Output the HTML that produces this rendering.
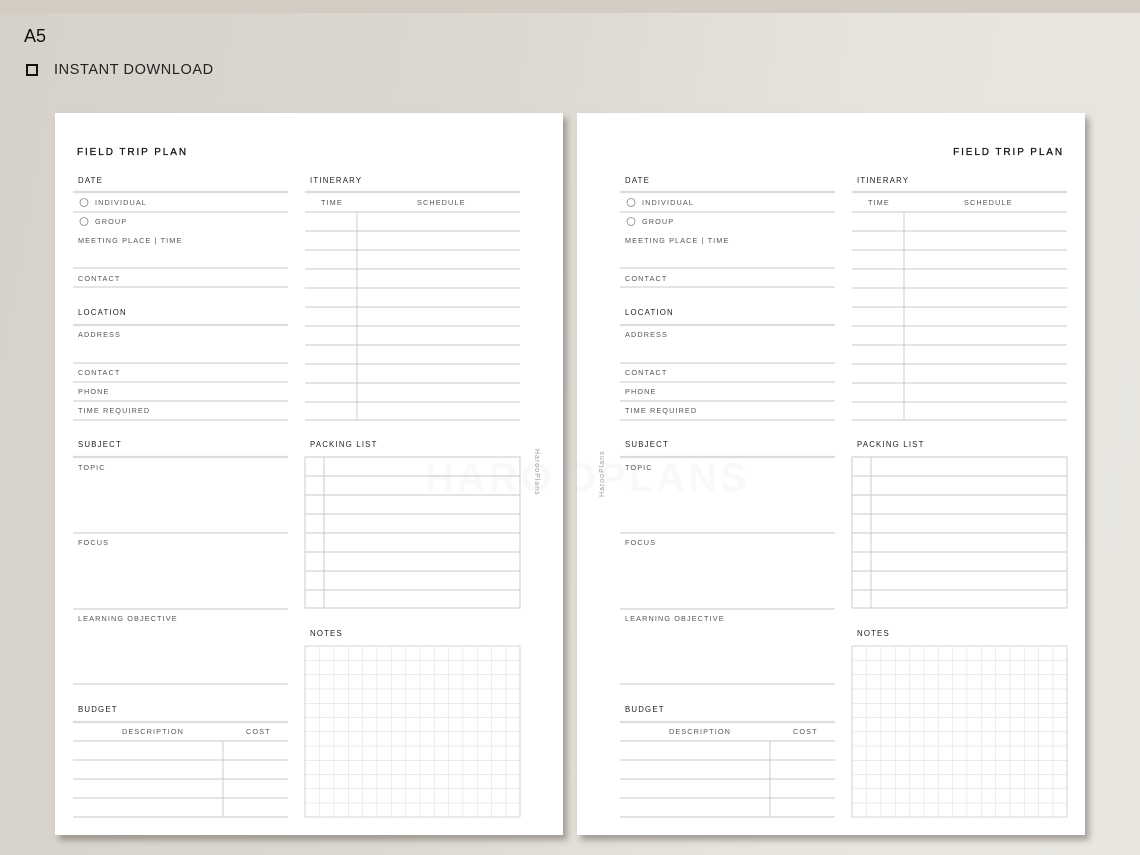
<!DOCTYPE html>
<html><head><meta charset="utf-8"><style>
html,body{margin:0;padding:0}
body{width:1140px;height:855px;overflow:hidden;position:relative;background:linear-gradient(100deg,#d6d1c9 0%,#dcd8d1 40%,#e7e4de 70%,#e9e6e0 100%);font-family:"Liberation Sans",sans-serif}
.top{position:absolute;left:0;top:0;width:1140px;height:13px;background:#d3ccc2}
.a5{position:absolute;left:24px;top:26px;font-size:18px;color:#111}
.box{position:absolute;left:26px;top:64px;width:8px;height:8px;border:2.5px solid #111}
.dl{position:absolute;left:54px;top:62px;font-size:14.5px;letter-spacing:0.6px;color:#222}
.page{position:absolute;top:113px;width:508px;height:722px;background:#fff;box-shadow:4px 5px 6px rgba(80,75,65,.45)}
svg{position:absolute;left:0;top:0}
text{font-family:"Liberation Sans",sans-serif;font-size:7.3px;letter-spacing:1.1px;fill:#555}
text.h{font-size:7.8px;fill:#222;letter-spacing:1.2px}
text.t{font-family:"Liberation Sans",sans-serif;font-size:10px;fill:#111;letter-spacing:1.9px;stroke:#111;stroke-width:0.25}
text.w{font-size:7px;fill:#999;letter-spacing:1px}
text.wm{font-size:40px;font-weight:bold;fill:#f9f9f9;letter-spacing:3px}
</style></head><body>
<div class="top"></div>
<div class="a5">A5</div><div class="box"></div><div class="dl">INSTANT DOWNLOAD</div>

<svg width="0" height="0" style="position:absolute">
<defs>
<pattern id="grid" patternUnits="userSpaceOnUse" x="250" y="533" width="14.333" height="14.25">
<path d="M0 0H14.333M0 0V14.25" stroke="#d8d8d8" stroke-width="0.9" fill="none"/>
</pattern>
<g id="L" fill="none">
<g stroke="#dcdcdc" stroke-width="2.2">
<path d="M18 79H233M18 212H233M18 344H233M18 609H233M250 79H465"/>
</g>
<g stroke="#c8c8c8" stroke-width="0.9">
<path d="M18 99H233M18 155H233M18 174H233M18 250H233M18 269H233M18 288H233M18 307H233M18 420H233M18 496H233M18 571H233M18 628H233M18 647H233M18 666H233M18 685H233M18 704H233M168 628V704"/>
<path d="M250 99H465M250 118H465M250 137H465M250 156H465M250 175H465M250 194H465M250 213H465M250 232H465M250 251H465M250 270H465M250 289H465M250 307H465M302 99V307"/>
<path d="M250 344H465V495H250ZM250 363H465M250 382H465M250 401H465M250 420H465M250 439H465M250 458H465M250 477H465M269 344V495"/>
</g>
<rect x="250" y="533" width="215" height="171" fill="url(#grid)" stroke="#d0d0d0" stroke-width="0.9"/>
<circle cx="29" cy="89.5" r="4" stroke="#888" stroke-width="0.8"/>
<circle cx="29" cy="108.5" r="4" stroke="#888" stroke-width="0.8"/>
</g>
</defs></svg>

<div class="page" style="left:55px">
<svg width="508" height="722">
<text class="wm" x="370" y="378">HARO</text>
<use href="#L" x="0" y="0"/>
<text class="t" x="22" y="42">FIELD TRIP PLAN</text>
<text class="h" x="23" y="70">DATE</text>
<text x="40" y="92">INDIVIDUAL</text>
<text x="40" y="111">GROUP</text>
<text x="23" y="130">MEETING PLACE | TIME</text>
<text x="23" y="168">CONTACT</text>
<text class="h" x="23" y="202">LOCATION</text>
<text x="23" y="224">ADDRESS</text>
<text x="23" y="262">CONTACT</text>
<text x="23" y="281">PHONE</text>
<text x="23" y="300">TIME REQUIRED</text>
<text class="h" x="255" y="70">ITINERARY</text>
<text x="266" y="92">TIME</text>
<text x="362" y="92">SCHEDULE</text>
<text class="h" x="23" y="334">SUBJECT</text>
<text x="23" y="357">TOPIC</text>
<text x="23" y="432">FOCUS</text>
<text x="23" y="508">LEARNING OBJECTIVE</text>
<text class="h" x="23" y="599">BUDGET</text>
<text x="67" y="621">DESCRIPTION</text>
<text x="191" y="621">COST</text>
<text class="h" x="255" y="334">PACKING LIST</text>
<text class="h" x="255" y="523">NOTES</text>
<text class="w" transform="translate(480,336) rotate(90)">HarooPlans</text>
</svg></div>

<div class="page" style="left:577px">
<svg width="508" height="722">
<text class="wm" x="-12" y="378">OPLANS</text>
<use href="#L" x="25" y="0"/>
<text class="t" x="487" y="42" text-anchor="end">FIELD TRIP PLAN</text>
<g transform="translate(25,0)">
<text class="h" x="23" y="70">DATE</text>
<text x="40" y="92">INDIVIDUAL</text>
<text x="40" y="111">GROUP</text>
<text x="23" y="130">MEETING PLACE | TIME</text>
<text x="23" y="168">CONTACT</text>
<text class="h" x="23" y="202">LOCATION</text>
<text x="23" y="224">ADDRESS</text>
<text x="23" y="262">CONTACT</text>
<text x="23" y="281">PHONE</text>
<text x="23" y="300">TIME REQUIRED</text>
<text class="h" x="255" y="70">ITINERARY</text>
<text x="266" y="92">TIME</text>
<text x="362" y="92">SCHEDULE</text>
<text class="h" x="23" y="334">SUBJECT</text>
<text x="23" y="357">TOPIC</text>
<text x="23" y="432">FOCUS</text>
<text x="23" y="508">LEARNING OBJECTIVE</text>
<text class="h" x="23" y="599">BUDGET</text>
<text x="67" y="621">DESCRIPTION</text>
<text x="191" y="621">COST</text>
<text class="h" x="255" y="334">PACKING LIST</text>
<text class="h" x="255" y="523">NOTES</text>
</g>
<text class="w" transform="translate(27,384) rotate(-90)">HarooPlans</text>
</svg></div>
</body></html>
